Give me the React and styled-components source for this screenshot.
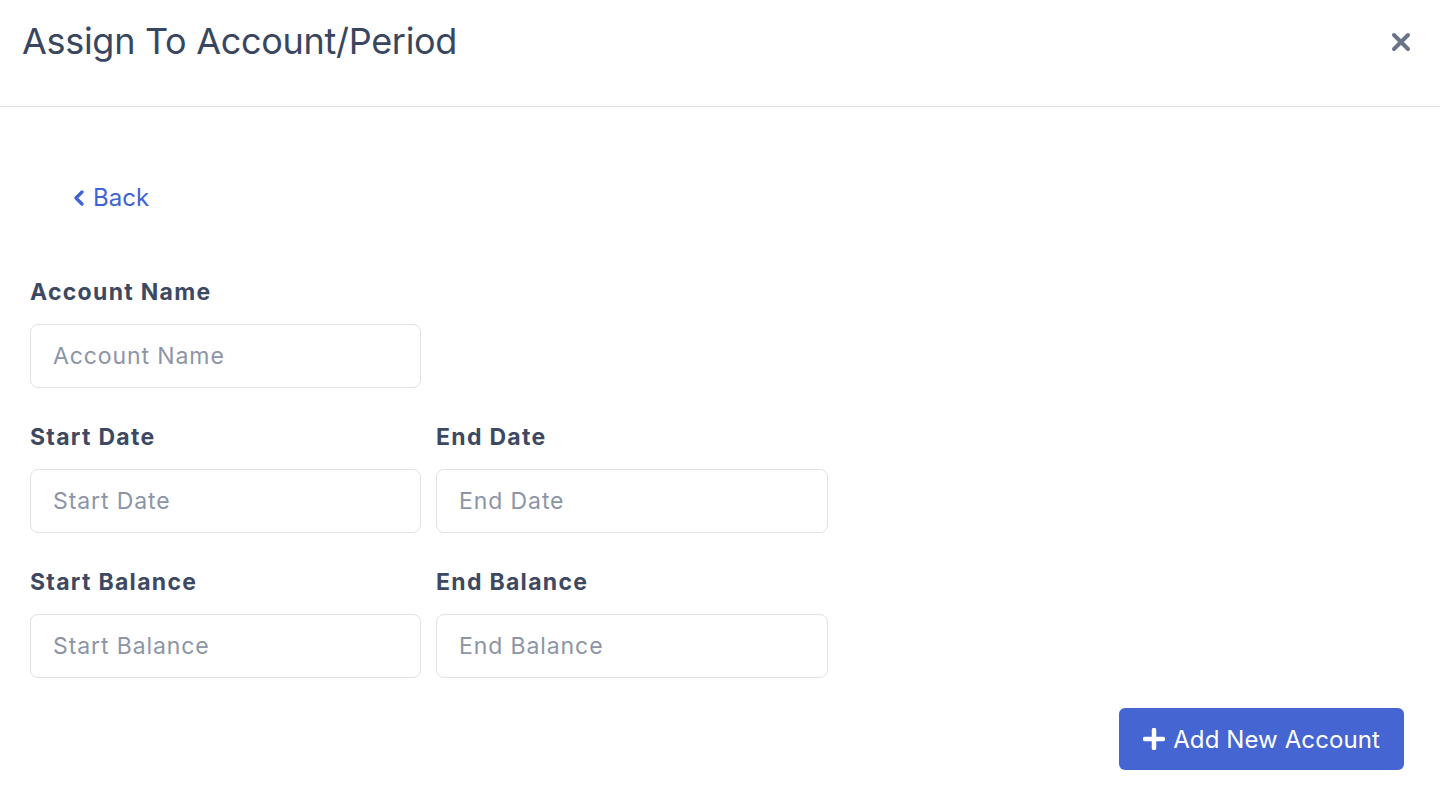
import React from "react";
import styled, { createGlobalStyle } from "styled-components";

const GlobalStyle = createGlobalStyle`
  * { box-sizing: border-box; }
  body {
    margin: 0;
    background: #ffffff;
    font-family: Inter, "Noto Sans", "Liberation Sans", sans-serif;
    color: #3a4760;
  }
`;

const Modal = styled.div`
  width: 1440px;
  height: 805px;
  background: #fff;
  display: flex;
  flex-direction: column;
`;

const Header = styled.header`
  height: 107px;
  border-bottom: 1px solid #dfe1e5;
  display: flex;
  align-items: flex-start;
  justify-content: space-between;
  padding: 19px 26px 0 22px;
`;

const Title = styled.h1`
  margin: 0;
  font-size: 36px;
  font-weight: 400;
  letter-spacing: -0.3px;
  color: #38465f;
  line-height: 44px;
`;

const CloseButton = styled.button`
  border: none;
  background: none;
  padding: 0;
  margin-top: 10px;
  width: 26px;
  height: 26px;
  display: flex;
  align-items: center;
  justify-content: center;
  cursor: pointer;
  color: #6b7487;
`;

const Body = styled.div`
  padding: 75px 30px 0 30px;
  display: flex;
  flex-direction: column;
`;

const BackLink = styled.a`
  display: inline-flex;
  align-items: center;
  gap: 8px;
  margin-left: 43px;
  font-size: 24px;
  color: #3f63d4;
  text-decoration: none;
  cursor: pointer;
  line-height: 32px;
  align-self: flex-start;
`;

const Form = styled.form`
  margin-top: 61px;
  display: grid;
  grid-template-columns: 391px 392px;
  column-gap: 15px;
  row-gap: 32px;
  align-items: start;
`;

const Field = styled.div`
  display: flex;
  flex-direction: column;
  gap: 15px;
`;

const Label = styled.label`
  font-size: 23px;
  font-weight: 700;
  color: #3d4962;
  line-height: 34px;
  letter-spacing: 1.3px;
`;

const Input = styled.input`
  height: 64px;
  width: 100%;
  border: 1px solid #dfe2e7;
  border-radius: 8px;
  padding: 0 22px;
  font-family: inherit;
  font-size: 23px;
  letter-spacing: 0.9px;
  color: #3a4760;
  outline: none;
  &::placeholder {
    color: #8c95a6;
  }
`;

const Footer = styled.div`
  display: flex;
  justify-content: flex-end;
  padding: 30px 36px 0 30px;
`;

const PrimaryButton = styled.button`
  display: inline-flex;
  align-items: center;
  gap: 8px;
  height: 62px;
  padding: 0 24px 0 24px;
  border: none;
  border-radius: 6px;
  background: #4565d3;
  color: #fff;
  font-family: inherit;
  font-size: 24px;
  letter-spacing: 0.1px;
  cursor: pointer;
`;

const fields = [
  { name: "Account Name", alone: true },
  { name: "Start Date" },
  { name: "End Date" },
  { name: "Start Balance" },
  { name: "End Balance" },
];

export default function App() {
  return (
    <>
      <GlobalStyle />
      <Modal>
        <Header>
          <Title>Assign To Account/Period</Title>
          <CloseButton aria-label="Close">
            <svg width="20" height="20" viewBox="0 0 20 20">
              <path
                d="M3 3 L17 17 M17 3 L3 17"
                stroke="currentColor"
                strokeWidth="4"
                strokeLinecap="round"
              />
            </svg>
          </CloseButton>
        </Header>
        <Body>
          <BackLink>
            <svg width="12" height="16" viewBox="0 0 12 16">
              <path
                d="M9 2 L3 8 L9 14"
                fill="none"
                stroke="currentColor"
                strokeWidth="3.2"
                strokeLinecap="round"
                strokeLinejoin="round"
              />
            </svg>
            Back
          </BackLink>
          <Form>
            {fields.map((f) => (
              <React.Fragment key={f.name}>
                <Field>
                  <Label>{f.name}</Label>
                  <Input placeholder={f.name} />
                </Field>
                {f.alone && <div />}
              </React.Fragment>
            ))}
          </Form>
        </Body>
        <Footer>
          <PrimaryButton type="button">
            <svg width="22" height="22" viewBox="0 0 22 22">
              <path
                d="M11 2 V20 M2 11 H20"
                stroke="currentColor"
                strokeWidth="4.5"
                strokeLinecap="round"
              />
            </svg>
            Add New Account
          </PrimaryButton>
        </Footer>
      </Modal>
    </>
  );
}
